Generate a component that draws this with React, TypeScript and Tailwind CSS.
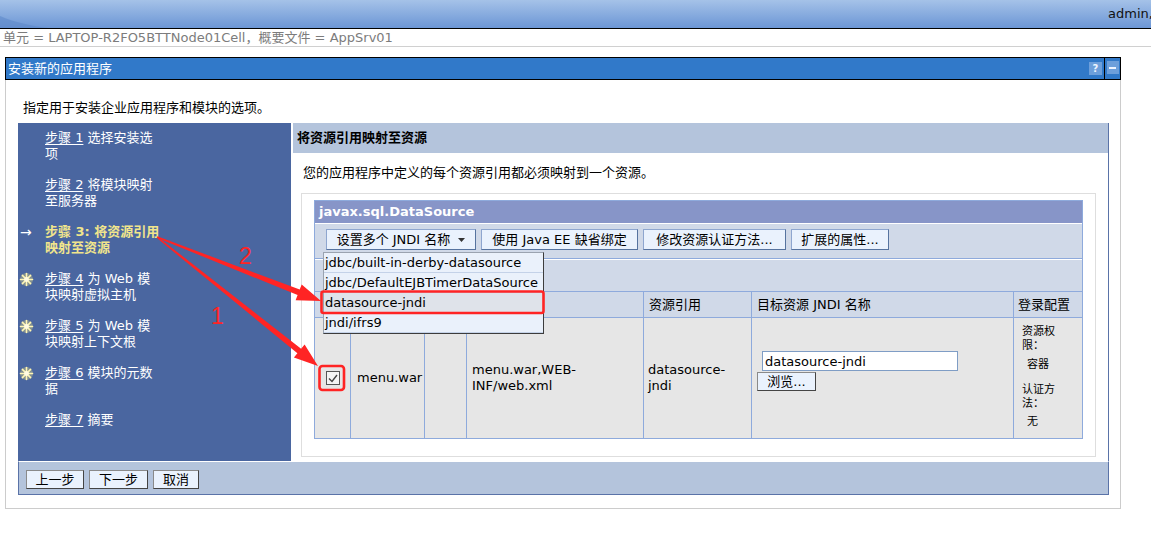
import React from "react";

const FONT = "font-['DejaVu_Sans','Noto_Sans_CJK_SC',sans-serif]";

type Step = { label: string; first: string; second?: string; icon?: "star" | "arrow"; current?: boolean };

const steps: Step[] = [
  { label: "步骤 1", first: " 选择安装选", second: "项" },
  { label: "步骤 2", first: " 将模块映射", second: "至服务器" },
  { label: "步骤 3:", first: " 将资源引用", second: "映射至资源", icon: "arrow", current: true },
  { label: "步骤 4", first: " 为 Web 模", second: "块映射虚拟主机", icon: "star" },
  { label: "步骤 5", first: " 为 Web 模", second: "块映射上下文根", icon: "star" },
  { label: "步骤 6", first: " 模块的元数", second: "据", icon: "star" },
  { label: "步骤 7", first: " 摘要" },
];

const dropdownItems = [
  "jdbc/built-in-derby-datasource",
  "jdbc/DefaultEJBTimerDataSource",
  "datasource-jndi",
  "jndi/ifrs9",
];

function Star() {
  return (
    <svg width="15" height="15" viewBox="0 0 15 15">
      <circle cx="7.5" cy="7.5" r="6.5" fill="#e9dc7a" opacity="0.35" />
      <g stroke="#fff6b5" strokeWidth="1.6" strokeLinecap="round">
        <line x1="7.5" y1="1.5" x2="7.5" y2="13.5" />
        <line x1="1.5" y1="7.5" x2="13.5" y2="7.5" />
        <line x1="3.4" y1="3.4" x2="11.6" y2="11.6" />
        <line x1="11.6" y1="3.4" x2="3.4" y2="11.6" />
      </g>
      <circle cx="7.5" cy="7.5" r="2.4" fill="#fffbe2" />
    </svg>
  );
}

// tapered arrow from (x0,y0) to tip (x1,y1)
function arrowPoints(x0: number, y0: number, x1: number, y1: number) {
  const dx = x1 - x0;
  const dy = y1 - y0;
  const len = Math.hypot(dx, dy);
  const ux = dx / len;
  const uy = dy / len;
  const nx = -uy;
  const ny = ux;
  const headLen = 24;
  const bx = x1 - ux * headLen;
  const by = y1 - uy * headLen;
  const p = (x: number, y: number) => `${x.toFixed(1)},${y.toFixed(1)}`;
  return [
    p(x0 + nx * 0.8, y0 + ny * 0.8),
    p(bx + nx * 3, by + ny * 3),
    p(bx + nx * 8.5, by + ny * 8.5),
    p(x1, y1),
    p(bx - nx * 8.5, by - ny * 8.5),
    p(bx - nx * 3, by - ny * 3),
    p(x0 - nx * 0.8, y0 - ny * 0.8),
  ].join(" ");
}

function BlueButton({ children, className = "" }: { children: React.ReactNode; className?: string }) {
  return (
    <button
      className={`flex h-[21px] items-center justify-center whitespace-nowrap border border-[#8ea6cf] border-b-[#56739f] border-r-[#56739f] bg-[#eaf2fd] text-[13px] text-black ${className}`}
    >
      {children}
    </button>
  );
}

function NavButton({ children, className = "" }: { children: React.ReactNode; className?: string }) {
  return (
    <button
      className={`flex h-[19px] items-center justify-center border border-[#8a8a8a] border-b-[#444] border-r-[#444] bg-[#eaf2fd] text-[13px] text-black ${className}`}
    >
      {children}
    </button>
  );
}

export default function App() {
  return (
    <div className={`relative h-[543px] w-[1151px] overflow-hidden bg-white text-[13px] text-black ${FONT}`}>
      {/* banner */}
      <div className="relative flex h-[29px] items-center justify-end overflow-visible border-b border-black bg-gradient-to-b from-[#a5c2e8] to-[#6c96d5]">
        <svg className="absolute left-0 top-0" width="60" height="28">
          <path d="M0 16 C 14 22, 32 26, 48 28 L0 28 Z" fill="#5b86c8" opacity="0.55" />
        </svg>
        <span className="relative w-[43px] shrink-0 whitespace-nowrap text-[#111]">admin,</span>
      </div>

      {/* context */}
      <div className="h-[18px] border-b border-[#d0d0d0] px-[3px] leading-[17px] text-[#7c7c7c]">
        单元 = LAPTOP-R2FO5BTTNode01Cell，概要文件 = AppSrv01
      </div>

      {/* portlet */}
      <div className="ml-[5px] mt-[10px] w-[1116px]">
        <div className="flex h-[23px] items-stretch border border-black bg-[#3179c9] text-white">
          <div className="flex flex-1 items-center pl-[2px]">安装新的应用程序</div>
          <div className="flex items-center pr-[2px]">
            <div className="flex h-[13px] w-[13px] items-center justify-center bg-[#6d9fdb] text-[10px] font-bold leading-none text-[#eef4ff]">
              ?
            </div>
          </div>
          <div className="w-px bg-black" />
          <div className="flex w-[15px] items-start justify-center pt-[3px]">
            <div className="flex h-[13px] w-[12px] items-center justify-center bg-[#6d9fdb]">
              <div className="h-[2px] w-[7px] bg-[#eef4ff]" />
            </div>
          </div>
        </div>

        <div className="h-[429px] border-x border-b border-[#cccccc] pt-[20px]">
          <p className="pl-[17px] leading-[16px]">指定用于安装企业应用程序和模块的选项。</p>

          {/* wizard */}
          <div className="ml-[12px] mt-[7px] w-[1091px]">
            <div className="flex h-[338px]">
              {/* steps */}
              <nav className="flex w-[273px] flex-col gap-[15px] bg-[#4a66a0] pt-[7px] leading-[16px] text-white">
                {steps.map((s) => (
                  <div key={s.label} className="flex">
                    <div className="flex h-[16px] w-[27px] shrink-0 items-center pl-[1px]">
                      {s.icon === "star" && <Star />}
                      {s.icon === "arrow" && <span className="pl-[1px] text-[14px] text-white">→</span>}
                    </div>
                    <div className={`whitespace-nowrap ${s.current ? "font-bold text-[#f1e58c]" : ""}`}>
                      <div>
                        {s.current ? s.label : <span className="underline underline-offset-2">{s.label}</span>}
                        {s.first}
                      </div>
                      {s.second && <div>{s.second}</div>}
                    </div>
                  </div>
                ))}
              </nav>
              <div className="w-[2px]" />

              {/* content */}
              <div className="flex flex-1 flex-col border-r border-[#5a73a8]">
                <div className="flex h-[30px] items-center bg-[#b4c4dc] pl-[4px] font-bold">将资源引用映射至资源</div>
                <p className="mt-[12px] pl-[10px] leading-[16px]">您的应用程序中定义的每个资源引用都必须映射到一个资源。</p>

                <div className="ml-[8px] mt-[12px] h-[264px] w-[795px] border border-[#dedede] pl-[12px] pt-[6px]">
                  <div className="w-[769px] border border-[#8eaadc]">
                    <div className="h-[22px] bg-[#8795c8] pl-[4px] font-bold leading-[22px] text-white">javax.sql.DataSource</div>

                    <div className="flex h-[36px] gap-[5px] border-y border-t-white border-b-[#8eaadc] bg-[#d0d9e8] pl-[11px] pt-[5px]">
                      <div className="relative">
                        <BlueButton className="w-[150px] gap-[8px]">
                          设置多个 JNDI 名称
                          <svg width="7" height="4" viewBox="0 0 7 4">
                            <path d="M0 0 L7 0 L3.5 4 Z" fill="#333" />
                          </svg>
                        </BlueButton>
                        {/* open dropdown */}
                        <div className="absolute left-[-3px] top-[23px] z-10 w-[221px] border border-[#9aa3b0] border-b-[#3c3c3c] border-r-[#3c3c3c] bg-[#eaf1fb]">
                          {dropdownItems.map((item, i) => (
                            <div
                              key={item}
                              className={`h-[20px] whitespace-nowrap border-b border-[#c4d2e8] pl-[1px] leading-[19px] ${
                                i === 2 ? "bg-[#dfe3ea]" : "bg-[#eaf1fb]"
                              }`}
                            >
                              {item}
                            </div>
                          ))}
                        </div>
                      </div>
                      <BlueButton className="w-[157px]">使用 Java EE 缺省绑定</BlueButton>
                      <BlueButton className="w-[143px]">修改资源认证方法...</BlueButton>
                      <BlueButton className="w-[98px]">扩展的属性...</BlueButton>
                    </div>

                    <div className="h-[33px] border-y border-t-white border-b-[#8eaadc] bg-[#d0d9e8]" />

                    {/* column headers; the first four sit under the open menu */}
                    <div className="flex h-[26px] border-b border-[#8eaadc] bg-[#d0d9e8] leading-[25px]">
                      <div className="w-[36px] border-r border-[#8eaadc]" />
                      <div className="w-[74px] border-r border-[#8eaadc]" />
                      <div className="w-[42px] border-r border-[#8eaadc]" />
                      <div className="w-[177px] border-r border-[#8eaadc]" />
                      <div className="w-[108px] border-r border-[#8eaadc] pl-[5px]">资源引用</div>
                      <div className="w-[262px] border-r border-[#8eaadc] pl-[5px]">目标资源 JNDI 名称</div>
                      <div className="w-[68px] pl-[4px]">登录配置</div>
                    </div>

                    <div className="flex h-[120px] bg-[#e6e6e6]">
                      <div className="flex w-[36px] items-center justify-center border-r border-[#8eaadc]">
                        <div className="flex h-[14px] w-[14px] items-center justify-center border border-[#555] bg-[#f4f4f4]">
                          <svg width="10" height="9" viewBox="0 0 10 9">
                            <path d="M1 4.5 L4 7.5 L9 1" stroke="#444" strokeWidth="1.4" fill="none" />
                          </svg>
                        </div>
                      </div>
                      <div className="flex w-[74px] items-center border-r border-[#8eaadc] pl-[6px]">menu.war</div>
                      <div className="w-[42px] border-r border-[#8eaadc]" />
                      <div className="flex w-[177px] items-center border-r border-[#8eaadc] pl-[5px] leading-[16px]">
                        <div>
                          menu.war,WEB-
                          <br />
                          INF/web.xml
                        </div>
                      </div>
                      <div className="flex w-[108px] items-center border-r border-[#8eaadc] pl-[4px] leading-[16px]">
                        <div>
                          datasource-
                          <br />
                          jndi
                        </div>
                      </div>
                      <div className="w-[262px] border-r border-[#8eaadc] pl-[5px] pt-[33px]">
                        <input
                          readOnly
                          value="datasource-jndi"
                          className="ml-[5px] block h-[20px] w-[196px] border border-[#7f9dc5] bg-white px-[2px] text-[13px] text-black outline-none"
                        />
                        <NavButton className="mt-[1px] w-[59px]">浏览...</NavButton>
                      </div>
                      <div className="w-[68px] pl-[8px] pt-[7px] text-[11px] leading-[14px]">
                        <div className="w-[40px]">资源权限：</div>
                        <div className="mt-[5px] pl-[5px]">容器</div>
                        <div className="mt-[11px] w-[40px]">认证方法：</div>
                        <div className="mt-[4px] pl-[5px]">无</div>
                      </div>
                    </div>
                  </div>
                </div>
              </div>
            </div>

            {/* footer buttons */}
            <div className="flex h-[34px] gap-[5px] border border-t-white border-x-[#5a73a8] border-b-[#5a73a8] bg-[#b4c4dc] pl-[7px] pt-[8px]">
              <NavButton className="w-[58px]">上一步</NavButton>
              <NavButton className="w-[59px]">下一步</NavButton>
              <NavButton className="w-[46px]">取消</NavButton>
            </div>
          </div>
        </div>
      </div>

      {/* annotations drawn over the screenshot */}
      <svg className="pointer-events-none absolute left-0 top-0 z-20" width="1151" height="543">
        <rect x="321.5" y="291.5" width="222" height="21.5" rx="2" fill="none" stroke="#ff2424" strokeWidth="2.6" />
        <rect x="319.5" y="366" width="24.5" height="24" rx="3" fill="none" stroke="#ff2424" strokeWidth="2.6" />
        <polygon points={arrowPoints(157, 237, 321, 301)} fill="#ff2424" />
        <polygon points={arrowPoints(158, 238, 318, 366)} fill="#ff2424" />
        <text x="239" y="264" fill="#ff2424" fontSize="23" fontFamily="'Liberation Sans', sans-serif">2</text>
        <text x="211" y="324" fill="#ff2424" fontSize="23" fontFamily="'Liberation Sans', sans-serif">1</text>
      </svg>
    </div>
  );
}
